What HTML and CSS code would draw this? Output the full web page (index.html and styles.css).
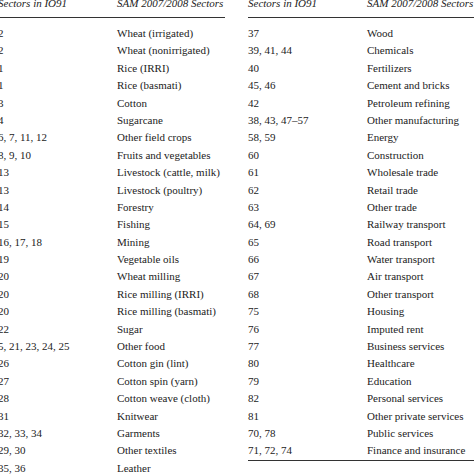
FILE: index.html
```html
<!DOCTYPE html>
<html>
<head>
<meta charset="utf-8">
<link rel="stylesheet" href="styles.css">
</head>
<body>
<div class="page">
  <div class="tbl tbl-left">
    <div class="row head"><span class="num">Sectors in IO91</span><span class="txt">SAM 2007/2008 Sectors</span></div>
    <div class="body">
      <div class="row"><span class="num">2</span><span class="txt">Wheat (irrigated)</span></div>
      <div class="row"><span class="num">2</span><span class="txt">Wheat (nonirrigated)</span></div>
      <div class="row"><span class="num">1</span><span class="txt">Rice (IRRI)</span></div>
      <div class="row"><span class="num">1</span><span class="txt">Rice (basmati)</span></div>
      <div class="row"><span class="num">3</span><span class="txt">Cotton</span></div>
      <div class="row"><span class="num">4</span><span class="txt">Sugarcane</span></div>
      <div class="row"><span class="num">6, 7, 11, 12</span><span class="txt">Other field crops</span></div>
      <div class="row"><span class="num">8, 9, 10</span><span class="txt">Fruits and vegetables</span></div>
      <div class="row"><span class="num">13</span><span class="txt">Livestock (cattle, milk)</span></div>
      <div class="row"><span class="num">13</span><span class="txt">Livestock (poultry)</span></div>
      <div class="row"><span class="num">14</span><span class="txt">Forestry</span></div>
      <div class="row"><span class="num">15</span><span class="txt">Fishing</span></div>
      <div class="row"><span class="num">16, 17, 18</span><span class="txt">Mining</span></div>
      <div class="row"><span class="num">19</span><span class="txt">Vegetable oils</span></div>
      <div class="row"><span class="num">20</span><span class="txt">Wheat milling</span></div>
      <div class="row"><span class="num">20</span><span class="txt">Rice milling (IRRI)</span></div>
      <div class="row"><span class="num">20</span><span class="txt">Rice milling (basmati)</span></div>
      <div class="row"><span class="num">22</span><span class="txt">Sugar</span></div>
      <div class="row"><span class="num">5, 21, 23, 24, 25</span><span class="txt">Other food</span></div>
      <div class="row"><span class="num">26</span><span class="txt">Cotton gin (lint)</span></div>
      <div class="row"><span class="num">27</span><span class="txt">Cotton spin (yarn)</span></div>
      <div class="row"><span class="num">28</span><span class="txt">Cotton weave (cloth)</span></div>
      <div class="row"><span class="num">31</span><span class="txt">Knitwear</span></div>
      <div class="row"><span class="num">32, 33, 34</span><span class="txt">Garments</span></div>
      <div class="row"><span class="num">29, 30</span><span class="txt">Other textiles</span></div>
      <div class="row"><span class="num">35, 36</span><span class="txt">Leather</span></div>
    </div>
  </div>
  <div class="tbl tbl-right">
    <div class="row head"><span class="num">Sectors in IO91</span><span class="txt">SAM 2007/2008 Sectors</span></div>
    <div class="body body-ruled">
      <div class="row"><span class="num">37</span><span class="txt">Wood</span></div>
      <div class="row"><span class="num">39, 41, 44</span><span class="txt">Chemicals</span></div>
      <div class="row"><span class="num">40</span><span class="txt">Fertilizers</span></div>
      <div class="row"><span class="num">45, 46</span><span class="txt">Cement and bricks</span></div>
      <div class="row"><span class="num">42</span><span class="txt">Petroleum refining</span></div>
      <div class="row"><span class="num">38, 43, 47–57</span><span class="txt">Other manufacturing</span></div>
      <div class="row"><span class="num">58, 59</span><span class="txt">Energy</span></div>
      <div class="row"><span class="num">60</span><span class="txt">Construction</span></div>
      <div class="row"><span class="num">61</span><span class="txt">Wholesale trade</span></div>
      <div class="row"><span class="num">62</span><span class="txt">Retail trade</span></div>
      <div class="row"><span class="num">63</span><span class="txt">Other trade</span></div>
      <div class="row"><span class="num">64, 69</span><span class="txt">Railway transport</span></div>
      <div class="row"><span class="num">65</span><span class="txt">Road transport</span></div>
      <div class="row"><span class="num">66</span><span class="txt">Water transport</span></div>
      <div class="row"><span class="num">67</span><span class="txt">Air transport</span></div>
      <div class="row"><span class="num">68</span><span class="txt">Other transport</span></div>
      <div class="row"><span class="num">75</span><span class="txt">Housing</span></div>
      <div class="row"><span class="num">76</span><span class="txt">Imputed rent</span></div>
      <div class="row"><span class="num">77</span><span class="txt">Business services</span></div>
      <div class="row"><span class="num">80</span><span class="txt">Healthcare</span></div>
      <div class="row"><span class="num">79</span><span class="txt">Education</span></div>
      <div class="row"><span class="num">82</span><span class="txt">Personal services</span></div>
      <div class="row"><span class="num">81</span><span class="txt">Other private services</span></div>
      <div class="row"><span class="num">70, 78</span><span class="txt">Public services</span></div>
      <div class="row"><span class="num">71, 72, 74</span><span class="txt">Finance and insurance</span></div>
    </div>
  </div>
</div>
</body>
</html>
```

FILE: styles.css
```css
html, body {
  margin: 0;
  padding: 0;
  background: #fff;
  overflow: hidden;
}
body {
  width: 474px;
  height: 474px;
  font-family: "Liberation Serif", "Times New Roman", serif;
  font-size: 11px;
  color: #222;
}
.page {
  display: flex;
  gap: 23px;
  margin-top: -4px;
  margin-left: -2px;
  width: 520px;
}
.tbl {
  width: 227px;
  flex: none;
}
.tbl-right {
  width: 260px;
}
.row {
  display: flex;
  height: 17.4px;
  line-height: 17.4px;
  white-space: nowrap;
}
.num {
  width: 119px;
  flex: none;
}
.txt {
  flex: 1;
}
.head {
  height: 21px;
  line-height: 14px;
  font-style: italic;
  border-bottom: 1.2px solid #333;
}
.body {
  padding-top: 7px;
}
.body-ruled {
  border-bottom: 1.2px solid #333;
}
```
